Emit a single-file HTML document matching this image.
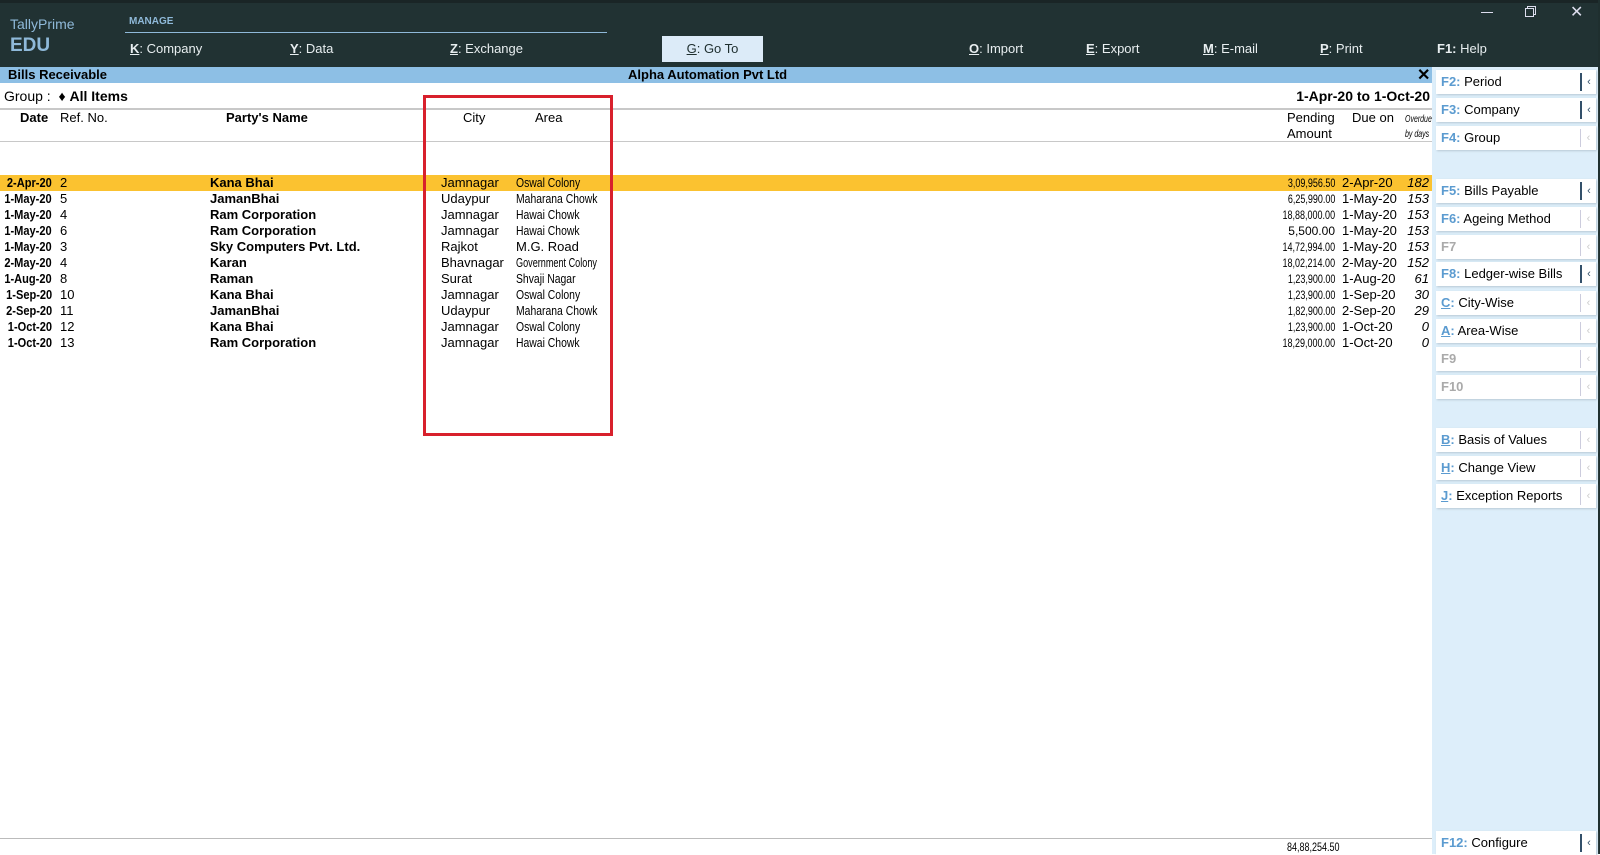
<!DOCTYPE html>
<html><head><meta charset="utf-8"><style>
*{margin:0;padding:0;box-sizing:border-box}
body{width:1600px;height:854px;overflow:hidden;background:#fff;font-family:"Liberation Sans",Arial,sans-serif;position:relative;color:#000}
.a{position:absolute;white-space:nowrap}
#hdr{position:absolute;left:0;top:0;width:1600px;height:67px;background:#213233}
#top{position:absolute;left:0;top:0;width:1600px;height:3px;background:#1a2526}
.m{color:#e8eef0;font-size:13px;top:41px}
.m u{font-weight:bold;text-decoration:underline}
#bar{position:absolute;left:0;top:67px;width:1432px;height:16px;background:#8dbfe5}
#side{position:absolute;left:1432px;top:67px;width:166px;height:787px;background:#ddeefa}
#edge{position:absolute;left:1598px;top:0;width:2px;height:854px;background:#1f2f2f}
.btn{position:absolute;left:1436px;width:160px;height:24px;background:#fff;box-shadow:1px 1px 2px #b8c8d4;font-size:13px;line-height:24px;padding-left:5px}
.btn b{color:#5b9bd0;font-weight:bold}
.btn i{position:absolute;right:0;top:3px;width:16px;height:18px;border-left:1px solid #ccd;font-style:normal;font-size:11px;color:#ccc;text-align:center;line-height:18px}
.btn i.on{border-left:2px solid #33506a;color:#33506a}
.btn.dis{color:#aaa}
.btn.dis b{color:#aaa}
.r{position:absolute;left:0;width:1432px;height:16px;font-size:13px;line-height:16px;overflow:hidden}
.r span{position:absolute;white-space:nowrap}
.d{right:1380px;font-weight:bold;transform:scaleX(.85);transform-origin:right}
.rf{left:60px}
.p{left:210px;font-weight:bold}
.c{left:441px}
.ar{left:516px;transform:scaleX(.8);transform-origin:left}
.am{right:97px;transform:scaleX(.75);transform-origin:right;font-size:12px}
.du{left:1342px}
.ov{right:3px;font-style:italic}
</style></head><body>
<div id="hdr"></div><div id="top"></div>
<div class="a" style="left:10px;top:16px;color:#8fb9d9;font-size:14px">TallyPrime</div>
<div class="a" style="left:10px;top:35px;color:#8fb9d9;font-size:19px;font-weight:bold">EDU</div>
<div class="a" style="left:129px;top:16px;color:#8fb9d9;font-size:10px;font-weight:bold">MANAGE</div>
<div class="a" style="left:125px;top:32px;width:482px;height:1px;background:#8fb9d9"></div>
<div class="a m" style="left:130px"><u>K</u>: Company</div>
<div class="a m" style="left:290px"><u>Y</u>: Data</div>
<div class="a m" style="left:450px"><u>Z</u>: Exchange</div>
<div class="a" style="left:662px;top:36px;width:101px;height:26px;background:#dcebf8;color:#1f2f2f;font-size:13px;text-align:center;line-height:26px"><u>G</u>: Go To</div>
<div class="a m" style="left:969px"><u>O</u>: Import</div>
<div class="a m" style="left:1086px"><u>E</u>: Export</div>
<div class="a m" style="left:1203px"><u>M</u>: E-mail</div>
<div class="a m" style="left:1320px"><u>P</u>: Print</div>
<div class="a m" style="left:1437px"><b>F1:</b> Help</div>
<div class="a" style="left:1481px;top:12px;width:12px;height:1px;background:#dde"></div>
<div class="a" style="left:1527px;top:6px;width:9px;height:9px;border:1px solid #dde"></div>
<div class="a" style="left:1525px;top:8px;width:9px;height:9px;border:1px solid #dde;background:#213233"></div>
<div class="a" style="left:1570px;top:2px;color:#dde;font-size:16px">✕</div>

<div id="bar"></div>
<div class="a" style="left:8px;top:67px;font-size:13px;font-weight:bold;line-height:16px">Bills Receivable</div>
<div class="a" style="left:628px;top:67px;font-size:13px;font-weight:bold;line-height:16px">Alpha Automation Pvt Ltd</div>
<div class="a" style="left:1417px;top:65px;font-size:16px;font-weight:bold">✕</div>

<div class="a" style="left:4px;top:88px;font-size:14px">Group : &nbsp;♦ <b>All Items</b></div>
<div class="a" style="right:170px;top:88px;font-size:14px;font-weight:bold">1-Apr-20 to 1-Oct-20</div>
<div class="a" style="left:0;top:108px;width:1432px;height:2px;background:#c8c8c8"></div>
<div class="a" style="left:20px;top:110px;font-size:13px;font-weight:bold">Date</div>
<div class="a" style="left:60px;top:110px;font-size:13px">Ref. No.</div>
<div class="a" style="left:226px;top:110px;font-size:13px;font-weight:bold">Party's Name</div>
<div class="a" style="left:463px;top:110px;font-size:13px">City</div>
<div class="a" style="left:535px;top:110px;font-size:13px">Area</div>
<div class="a" style="left:1287px;top:110px;font-size:13px;line-height:16px">Pending<br>Amount</div>
<div class="a" style="left:1352px;top:110px;font-size:13px">Due on</div>
<div class="a" style="left:1405px;top:112px;font-size:10px;font-style:italic;transform:scaleX(.7);transform-origin:left;line-height:15px">Overdue<br>by days</div>
<div class="a" style="left:0;top:141px;width:1432px;height:1px;background:#c8c8c8"></div>

<div class="r" style="top:175px;background:#fbc230"><span class="d">2-Apr-20</span><span class="rf">2</span><span class="p">Kana Bhai</span><span class="c">Jamnagar</span><span class="ar">Oswal Colony</span><span class="am">3,09,956.50</span><span class="du">2-Apr-20</span><span class="ov">182</span></div>
<div class="r" style="top:191px"><span class="d">1-May-20</span><span class="rf">5</span><span class="p">JamanBhai</span><span class="c">Udaypur</span><span class="ar">Maharana Chowk</span><span class="am">6,25,990.00</span><span class="du">1-May-20</span><span class="ov">153</span></div>
<div class="r" style="top:207px"><span class="d">1-May-20</span><span class="rf">4</span><span class="p">Ram Corporation</span><span class="c">Jamnagar</span><span class="ar">Hawai Chowk</span><span class="am">18,88,000.00</span><span class="du">1-May-20</span><span class="ov">153</span></div>
<div class="r" style="top:223px"><span class="d">1-May-20</span><span class="rf">6</span><span class="p">Ram Corporation</span><span class="c">Jamnagar</span><span class="ar">Hawai Chowk</span><span class="am" style="transform:none">5,500.00</span><span class="du">1-May-20</span><span class="ov">153</span></div>
<div class="r" style="top:239px"><span class="d">1-May-20</span><span class="rf">3</span><span class="p">Sky Computers Pvt. Ltd.</span><span class="c">Rajkot</span><span class="ar" style="transform:none">M.G. Road</span><span class="am">14,72,994.00</span><span class="du">1-May-20</span><span class="ov">153</span></div>
<div class="r" style="top:255px"><span class="d">2-May-20</span><span class="rf">4</span><span class="p">Karan</span><span class="c">Bhavnagar</span><span class="ar" style="transform:scaleX(.7)">Government Colony</span><span class="am">18,02,214.00</span><span class="du">2-May-20</span><span class="ov">152</span></div>
<div class="r" style="top:271px"><span class="d">1-Aug-20</span><span class="rf">8</span><span class="p">Raman</span><span class="c">Surat</span><span class="ar">Shvaji Nagar</span><span class="am">1,23,900.00</span><span class="du">1-Aug-20</span><span class="ov">61</span></div>
<div class="r" style="top:287px"><span class="d">1-Sep-20</span><span class="rf">10</span><span class="p">Kana Bhai</span><span class="c">Jamnagar</span><span class="ar">Oswal Colony</span><span class="am">1,23,900.00</span><span class="du">1-Sep-20</span><span class="ov">30</span></div>
<div class="r" style="top:303px"><span class="d">2-Sep-20</span><span class="rf">11</span><span class="p">JamanBhai</span><span class="c">Udaypur</span><span class="ar">Maharana Chowk</span><span class="am">1,82,900.00</span><span class="du">2-Sep-20</span><span class="ov">29</span></div>
<div class="r" style="top:319px"><span class="d">1-Oct-20</span><span class="rf">12</span><span class="p">Kana Bhai</span><span class="c">Jamnagar</span><span class="ar">Oswal Colony</span><span class="am">1,23,900.00</span><span class="du">1-Oct-20</span><span class="ov">0</span></div>
<div class="r" style="top:335px"><span class="d">1-Oct-20</span><span class="rf">13</span><span class="p">Ram Corporation</span><span class="c">Jamnagar</span><span class="ar">Hawai Chowk</span><span class="am">18,29,000.00</span><span class="du">1-Oct-20</span><span class="ov">0</span></div>

<div class="a" style="left:423px;top:95px;width:190px;height:341px;border:3px solid #d8202c"></div>

<div class="a" style="left:0;top:838px;width:1432px;height:1px;background:#bbb"></div>
<div class="a" style="left:1287px;top:840px;font-size:12px;transform:scaleX(.75);transform-origin:left">84,88,254.50</div>

<div id="side"></div><div id="edge"></div>
<div class="btn" style="top:70px"><b>F2:</b> Period<i class="on">‹</i></div>
<div class="btn" style="top:98px"><b>F3:</b> Company<i class="on">‹</i></div>
<div class="btn" style="top:126px"><b>F4:</b> Group<i>‹</i></div>
<div class="btn" style="top:179px"><b>F5:</b> Bills Payable<i class="on">‹</i></div>
<div class="btn" style="top:207px"><b>F6:</b> Ageing Method<i>‹</i></div>
<div class="btn dis" style="top:235px"><b>F7</b><i>‹</i></div>
<div class="btn" style="top:262px"><b>F8:</b> Ledger-wise Bills<i class="on">‹</i></div>
<div class="btn" style="top:291px"><b><u>C</u>:</b> City-Wise<i>‹</i></div>
<div class="btn" style="top:319px"><b><u>A</u>:</b> Area-Wise<i>‹</i></div>
<div class="btn dis" style="top:347px"><b>F9</b><i>‹</i></div>
<div class="btn dis" style="top:375px"><b>F10</b><i>‹</i></div>
<div class="btn" style="top:428px"><b><u>B</u>:</b> Basis of Values<i>‹</i></div>
<div class="btn" style="top:456px"><b><u>H</u>:</b> Change View<i>‹</i></div>
<div class="btn" style="top:484px"><b><u>J</u>:</b> Exception Reports<i>‹</i></div>
<div class="btn" style="top:831px"><b>F12:</b> Configure<i class="on">‹</i></div>
</body></html>
